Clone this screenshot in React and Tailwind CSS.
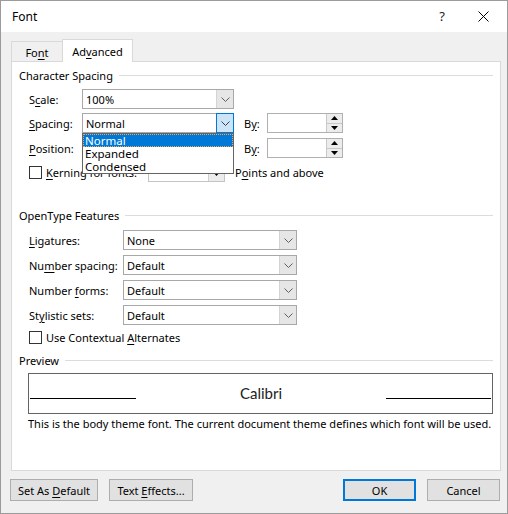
import React from "react";

function U({ children }) {
  return <span className="underline decoration-1 underline-offset-[2px]">{children}</span>;
}

function Chevron({ color = "#606060" }) {
  return (
    <svg width="9" height="5" viewBox="0 0 9 5">
      <path d="M0.5 0.5 L4.5 4.5 L8.5 0.5" fill="none" stroke={color} strokeWidth="1" />
    </svg>
  );
}

function TriUp() {
  return (
    <svg width="7" height="4" viewBox="0 0 7 4">
      <path d="M3.5 0 L7 4 L0 4 Z" fill="#000" />
    </svg>
  );
}
function TriDown() {
  return (
    <svg width="7" height="4" viewBox="0 0 7 4">
      <path d="M0 0 L7 0 L3.5 4 Z" fill="#000" />
    </svg>
  );
}

function Combo({ value, wide, focused, children }) {
  return (
    <div
      className={
        wide
          ? "relative flex h-[20px] w-[174px] border border-[#a8a8a8] bg-white"
          : "relative flex h-[20px] w-[152px] border border-[#a8a8a8] bg-white"
      }
    >
      <div className="flex flex-1 items-center pl-[3px] leading-[15px]">{value}</div>
      {focused ? (
        <div className="-my-[1px] -mr-[1px] flex w-[18px] items-center justify-center border border-[#0078d7] bg-[#cce4f7]">
          <Chevron color="#404040" />
        </div>
      ) : (
        <div className="flex w-[17px] items-center justify-center border-l border-[#d4d4d4] bg-[#e6e6e6]">
          <Chevron />
        </div>
      )}
      {children}
    </div>
  );
}

function Spin() {
  return (
    <div className="flex h-[20px] w-[76px] border border-[#b0b0b0] bg-white">
      <div className="flex-1" />
      <div className="flex w-[16px] flex-col border-l border-[#c8c8c8] bg-[#ececec]">
        <div className="flex flex-1 items-center justify-center border-b border-[#c8c8c8]">
          <TriUp />
        </div>
        <div className="flex flex-1 items-center justify-center">
          <TriDown />
        </div>
      </div>
    </div>
  );
}

function Checkbox() {
  return <div className="h-[13px] w-[13px] border border-[#333333] bg-white" />;
}

function Header({ children }) {
  return (
    <div className="flex h-[15px] items-center gap-[6px]">
      <span className="whitespace-nowrap">{children}</span>
      <div className="h-px flex-1 bg-[#dcdcdc]" />
    </div>
  );
}

export default function App() {
  return (
    <div className="flex h-[514px] w-[508px] flex-col overflow-hidden border border-[#9b9b9b] bg-[#f0f0f0] font-['Noto_Sans',sans-serif] text-[11px] leading-[15px] text-black">
      {/* Title bar */}
      <div className="flex h-[31px] shrink-0 items-center bg-white pl-[11px] pr-[18px]">
        <span className="text-[12px]">Font</span>
        <div className="ml-auto flex items-center">
          <span className="text-[13px] text-[#222222]">?</span>
          <svg className="ml-[33px]" width="11" height="11" viewBox="0 0 11 11">
            <path d="M0.5 0.5 L10.5 10.5 M10.5 0.5 L0.5 10.5" stroke="#000" strokeWidth="1" />
          </svg>
        </div>
      </div>

      {/* Tabs */}
      <div className="flex h-[29px] shrink-0 items-end pl-[10px]">
        <div className="flex h-[20px] w-[51px] items-center justify-center border-l border-t border-[#d9d9d9] bg-[#f0f0f0] pt-[1px]">
          <span>
            Fo<U>n</U>t
          </span>
        </div>
        <div className="relative z-10 -mb-px flex h-[23px] w-[71px] items-center justify-center border-l border-r border-t border-[#d9d9d9] bg-white">
          <span>
            Ad<U>v</U>anced
          </span>
        </div>
      </div>

      {/* Panel */}
      <div className="ml-[10px] flex h-[410px] w-[490px] shrink-0 flex-col border border-[#d9d9d9] bg-white pl-[7px] pr-[7px] pt-[6px]">
        <Header>Character Spacing</Header>

        {/* Scale */}
        <div className="mt-[6px] flex h-[20px] items-center pl-[10px]">
          <span className="w-[53px]">
            S<U>c</U>ale:
          </span>
          <Combo value="100%" />
        </div>

        {/* Spacing */}
        <div className="relative z-20 mt-[4px] flex h-[20px] items-center pl-[10px]">
          <span className="w-[53px]">
            <U>S</U>pacing:
          </span>
          <Combo value="Normal" focused>
            <div className="absolute left-[-1px] top-[19px] w-[152px] border border-[#646464] bg-white text-[11.5px] leading-[13px]">
              <div className="h-[13px] border border-dotted border-[#e8a860] bg-[#0078d7] pl-[1px] leading-[11px] text-white">
                Normal
              </div>
              <div className="h-[13px] pl-[2px]">Expanded</div>
              <div className="h-[13px] pl-[2px]">Condensed</div>
            </div>
          </Combo>
          <span className="ml-[10px] w-[23px]">
            B<U>y</U>:
          </span>
          <Spin />
        </div>

        {/* Position */}
        <div className="mt-[5px] flex h-[20px] items-center pl-[10px]">
          <span className="w-[53px]">
            <U>P</U>osition:
          </span>
          <Combo value="Normal" />
          <span className="ml-[10px] w-[23px]">
            B<U>y</U>:
          </span>
          <Spin />
        </div>

        {/* Kerning */}
        <div className="mt-[4px] flex h-[20px] items-center pl-[10px]">
          <div className="flex w-[119px] items-center">
            <Checkbox />
            <span className="ml-[4px] whitespace-nowrap">
              <U>K</U>erning for fonts:
            </span>
          </div>
          <div className="flex h-[20px] w-[77px] border border-[#c4c4c4] bg-white">
            <div className="flex-1" />
            <div className="flex w-[16px] items-end justify-center border-l border-[#d0d0d0] bg-[#ececec] pb-[5px]">
              <TriDown />
            </div>
          </div>
          <span className="ml-[10px]">
            P<U>o</U>ints and above
          </span>
        </div>

        {/* OpenType */}
        <div className="mt-[26px]">
          <Header>OpenType Features</Header>
        </div>

        <div className="mt-[7px] flex h-[20px] items-center pl-[10px]">
          <span className="w-[94px]">
            <U>L</U>igatures:
          </span>
          <Combo value="None" wide />
        </div>
        <div className="mt-[5px] flex h-[20px] items-center pl-[10px]">
          <span className="w-[94px] whitespace-nowrap">
            Nu<U>m</U>ber spacing:
          </span>
          <Combo value="Default" wide />
        </div>
        <div className="mt-[5px] flex h-[20px] items-center pl-[10px]">
          <span className="w-[94px]">
            Number <U>f</U>orms:
          </span>
          <Combo value="Default" wide />
        </div>
        <div className="mt-[5px] flex h-[20px] items-center pl-[10px]">
          <span className="w-[94px]">
            St<U>y</U>listic sets:
          </span>
          <Combo value="Default" wide />
        </div>

        <div className="mt-[5px] flex h-[15px] items-center pl-[10px]">
          <Checkbox />
          <span className="ml-[4px]">
            Use Contextual <U>A</U>lternates
          </span>
        </div>

        {/* Preview */}
        <div className="mt-[8px]">
          <Header>Preview</Header>
        </div>
        <div className="ml-[9px] mt-[5px] flex h-[41px] w-[465px] items-center border border-[#646464] px-[1px]">
          <div className="mt-[10px] h-px w-[106px] bg-black" />
          <div className="flex-1 text-center font-['Lato',sans-serif] text-[15px] text-[#222222]">Calibri</div>
          <div className="mt-[10px] h-px w-[105px] bg-black" />
        </div>
        <div className="ml-[9px] mt-[2px] whitespace-nowrap">
          This is the body theme font. The current document theme defines which font will be used.
        </div>
      </div>

      {/* Buttons */}
      <div className="mt-[8px] flex items-center pl-[9px] pr-[7px]">
        <div className="flex h-[22px] w-[88px] items-center justify-center border border-[#adadad] bg-[#e1e1e1]">
          <span>
            Set As <U>D</U>efault
          </span>
        </div>
        <div className="ml-[11px] flex h-[22px] w-[84px] items-center justify-center border border-[#adadad] bg-[#e1e1e1]">
          <span>
            Text <U>E</U>ffects...
          </span>
        </div>
        <div className="ml-auto flex h-[22px] w-[73px] items-center justify-center border-2 border-[#0078d7] bg-[#e1e1e1]">
          OK
        </div>
        <div className="ml-[11px] flex h-[22px] w-[73px] items-center justify-center border border-[#adadad] bg-[#e1e1e1]">
          Cancel
        </div>
      </div>
    </div>
  );
}
